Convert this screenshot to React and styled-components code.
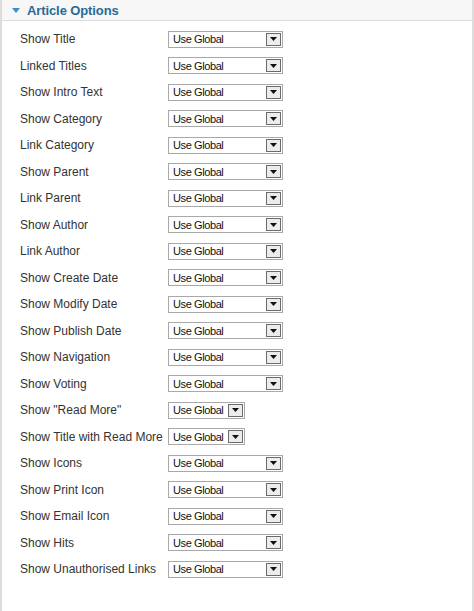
import styled, { createGlobalStyle } from "styled-components";

const GlobalStyle = createGlobalStyle`
  html, body {
    margin: 0;
    padding: 0;
    background: #ffffff;
  }
  body {
    font-family: "Liberation Sans", Arial, sans-serif;
  }
`;

const options = [
  { label: "Show Title" },
  { label: "Linked Titles" },
  { label: "Show Intro Text" },
  { label: "Show Category" },
  { label: "Link Category" },
  { label: "Show Parent" },
  { label: "Link Parent" },
  { label: "Show Author" },
  { label: "Link Author" },
  { label: "Show Create Date" },
  { label: "Show Modify Date" },
  { label: "Show Publish Date" },
  { label: "Show Navigation" },
  { label: "Show Voting" },
  { label: 'Show "Read More"', narrow: true },
  { label: "Show Title with Read More", narrow: true },
  { label: "Show Icons" },
  { label: "Show Print Icon" },
  { label: "Show Email Icon" },
  { label: "Show Hits" },
  { label: "Show Unauthorised Links" },
];

function Select({ narrow }) {
  return (
    <SelectBox $narrow={narrow}>
      <SelectText>Use Global</SelectText>
      <ArrowButton>
        <svg width="7" height="4" viewBox="0 0 7 4">
          <path d="M0 0 H7 L3.5 4 Z" fill="#111" />
        </svg>
      </ArrowButton>
    </SelectBox>
  );
}

export default function App() {
  return (
    <>
      <GlobalStyle />
      <Panel>
        <Header>
          <Toggle>
            <svg width="8" height="5" viewBox="0 0 8 5">
              <path d="M0 0 H8 L4 5 Z" fill="#3d8fc6" />
            </svg>
          </Toggle>
          <Title>Article Options</Title>
        </Header>
        <List>
          {options.map((opt) => (
            <Row key={opt.label}>
              <Label>{opt.label}</Label>
              <Select narrow={opt.narrow} />
            </Row>
          ))}
        </List>
      </Panel>
    </>
  );
}

const Panel = styled.div`
  width: 474px;
  height: 611px;
  box-sizing: border-box;
  border-left: 2px solid #dcdcdc;
  border-right: 2px solid #dcdcdc;
  background: #ffffff;
`;

const Header = styled.div`
  display: flex;
  align-items: center;
  gap: 7px;
  height: 20px;
  padding-left: 10px;
  background: #f7f7f7;
  border-bottom: 1px solid #dddddd;
`;

const Toggle = styled.span`
  display: flex;
  align-items: center;
  padding-top: 1px;
`;

const Title = styled.span`
  font-size: 13px;
  font-weight: bold;
  color: #2a6a96;
  letter-spacing: -0.1px;
`;

const List = styled.div`
  display: flex;
  flex-direction: column;
  padding: 5px 0 0 18px;
`;

const Row = styled.div`
  display: flex;
  align-items: center;
  gap: 4px;
  height: 26.5px;
`;

const Label = styled.span`
  min-width: 144px;
  font-size: 12px;
  color: #333333;
  white-space: nowrap;
`;

const SelectBox = styled.div`
  display: flex;
  align-items: center;
  justify-content: space-between;
  box-sizing: border-box;
  width: ${(p) => (p.$narrow ? "77px" : "115px")};
  height: 17px;
  padding: 0 1px 0 4px;
  border: 1px solid #a9a9a9;
  background: #ffffff;
`;

const SelectText = styled.span`
  font-size: 11px;
  letter-spacing: -0.4px;
  color: #111111;
  white-space: nowrap;
`;

const ArrowButton = styled.span`
  display: flex;
  flex-shrink: 0;
  align-items: center;
  justify-content: center;
  box-sizing: border-box;
  width: 15px;
  height: 13px;
  border: 1px solid #6b6b6b;
  background: #ececec;
`;
